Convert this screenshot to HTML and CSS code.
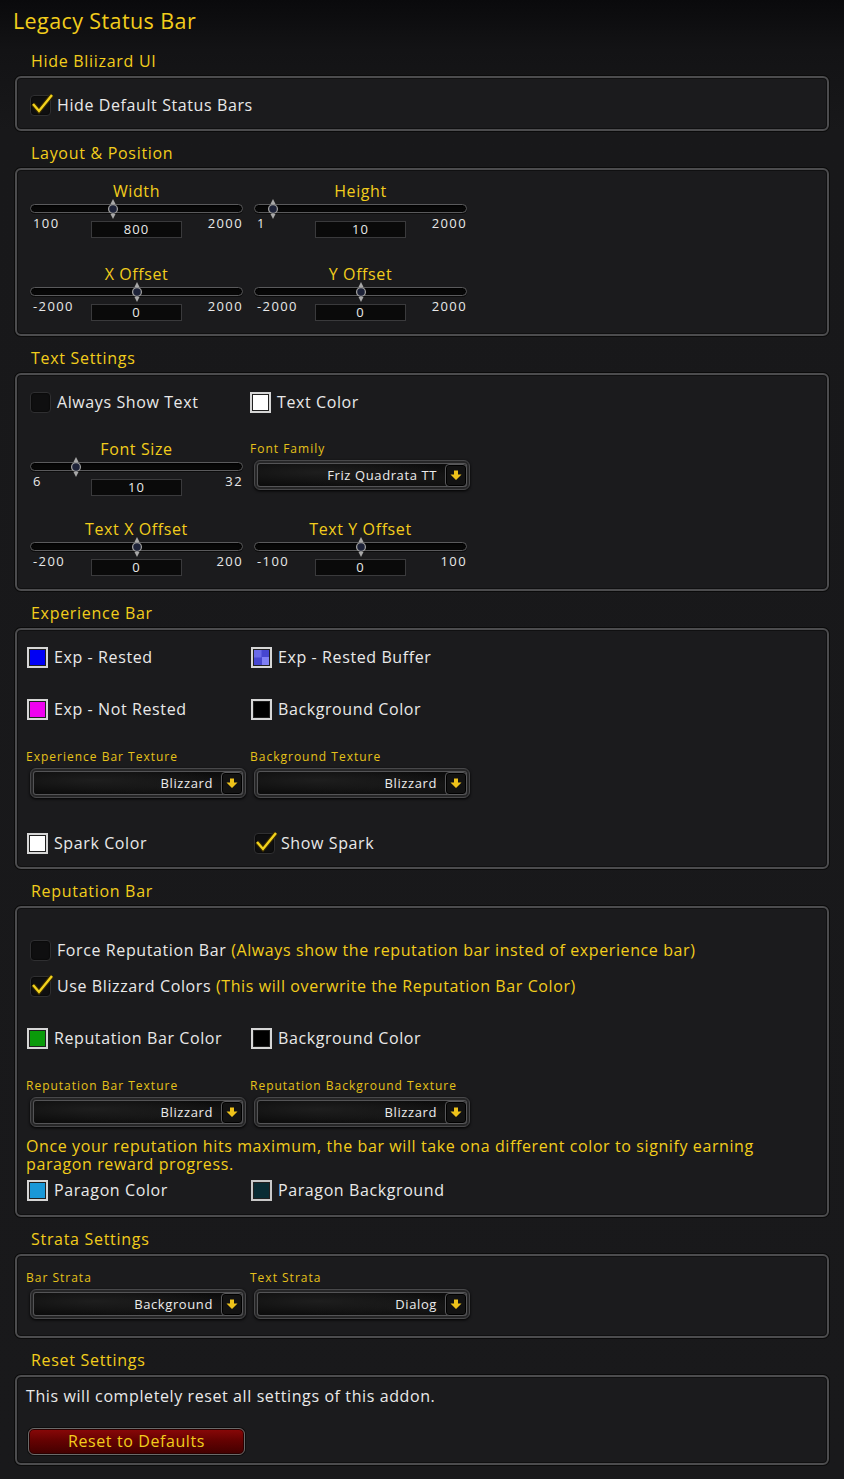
FILE: index.html
```html
<!DOCTYPE html>
<html lang="en">
<head>
<meta charset="utf-8">
<title>Legacy Status Bar</title>
<link rel="stylesheet" href="styles.css">
</head>
<body>
<div class="page">
  <h1 class="title">Legacy Status Bar</h1>

  <section>
    <h2 class="sec-head">Hide Bliizard UI</h2>
    <div class="panel p1">
      <div class="check-row"><span class="cb"><svg class="tick" viewBox="0 0 24 24" width="24" height="24"><path d="M2 12 L8 19 L21 3" fill="none" stroke="#3a2c00" stroke-width="4.5"/><path d="M2 12 L8 19 L21 3" fill="none" stroke="#f2d21c" stroke-width="2.4"/></svg></span><span>Hide Default Status Bars</span></div>
    </div>
  </section>

  <section>
    <h2 class="sec-head">Layout &amp; Position</h2>
    <div class="panel p2">
      <div class="cols sliders-grid">
        <div class="slider">
          <div class="slider-label">Width</div>
          <div class="track-wrap"><div class="track"></div><svg class="thumb" style="left:39%" viewBox="0 0 10 20" width="10" height="20"><path d="M5 0 L7.5 5 H2.5 Z" fill="#a8a8a8"/><path d="M2.5 15 H7.5 L5 20 Z" fill="#a8a8a8"/><circle cx="5" cy="10" r="4.4" fill="#1d2238" stroke="#9a9a9a" stroke-width="1.3"/></svg></div>
          <div class="slider-foot"><span class="min">100</span><span class="val">800</span><span class="max">2000</span></div>
        </div>
        <div class="slider">
          <div class="slider-label">Height</div>
          <div class="track-wrap"><div class="track"></div><svg class="thumb" style="left:9%" viewBox="0 0 10 20" width="10" height="20"><path d="M5 0 L7.5 5 H2.5 Z" fill="#a8a8a8"/><path d="M2.5 15 H7.5 L5 20 Z" fill="#a8a8a8"/><circle cx="5" cy="10" r="4.4" fill="#1d2238" stroke="#9a9a9a" stroke-width="1.3"/></svg></div>
          <div class="slider-foot"><span class="min">1</span><span class="val">10</span><span class="max">2000</span></div>
        </div>
        <div class="slider">
          <div class="slider-label">X Offset</div>
          <div class="track-wrap"><div class="track"></div><svg class="thumb" style="left:50%" viewBox="0 0 10 20" width="10" height="20"><path d="M5 0 L7.5 5 H2.5 Z" fill="#a8a8a8"/><path d="M2.5 15 H7.5 L5 20 Z" fill="#a8a8a8"/><circle cx="5" cy="10" r="4.4" fill="#1d2238" stroke="#9a9a9a" stroke-width="1.3"/></svg></div>
          <div class="slider-foot"><span class="min">-2000</span><span class="val">0</span><span class="max">2000</span></div>
        </div>
        <div class="slider">
          <div class="slider-label">Y Offset</div>
          <div class="track-wrap"><div class="track"></div><svg class="thumb" style="left:50%" viewBox="0 0 10 20" width="10" height="20"><path d="M5 0 L7.5 5 H2.5 Z" fill="#a8a8a8"/><path d="M2.5 15 H7.5 L5 20 Z" fill="#a8a8a8"/><circle cx="5" cy="10" r="4.4" fill="#1d2238" stroke="#9a9a9a" stroke-width="1.3"/></svg></div>
          <div class="slider-foot"><span class="min">-2000</span><span class="val">0</span><span class="max">2000</span></div>
        </div>
      </div>
    </div>
  </section>

  <section>
    <h2 class="sec-head">Text Settings</h2>
    <div class="panel p3">
      <div class="cols">
        <div class="check-row"><span class="cb"></span><span>Always Show Text</span></div>
        <div class="check-row"><span class="sw sw-white sw-first"></span><span>Text Color</span></div>
      </div>
      <div class="cols row-font">
        <div class="slider">
          <div class="slider-label">Font Size</div>
          <div class="track-wrap"><div class="track"></div><svg class="thumb" style="left:21.6%" viewBox="0 0 10 20" width="10" height="20"><path d="M5 0 L7.5 5 H2.5 Z" fill="#a8a8a8"/><path d="M2.5 15 H7.5 L5 20 Z" fill="#a8a8a8"/><circle cx="5" cy="10" r="4.4" fill="#1d2238" stroke="#9a9a9a" stroke-width="1.3"/></svg></div>
          <div class="slider-foot"><span class="min">6</span><span class="val">10</span><span class="max">32</span></div>
        </div>
        <div class="dd-field dd-offset">
          <div class="dd-label">Font Family</div>
          <div class="dropdown"><span class="dd-text">Friz Quadrata TT</span><span class="dd-btn"><svg viewBox="0 0 12 12" width="12" height="12"><path d="M4 1.5h4v4h3.5L6 11 0.5 5.5H4z" fill="#eec21a"/></svg></span></div>
        </div>
      </div>
      <div class="cols row-offset">
        <div class="slider">
          <div class="slider-label">Text X Offset</div>
          <div class="track-wrap"><div class="track"></div><svg class="thumb" style="left:50%" viewBox="0 0 10 20" width="10" height="20"><path d="M5 0 L7.5 5 H2.5 Z" fill="#a8a8a8"/><path d="M2.5 15 H7.5 L5 20 Z" fill="#a8a8a8"/><circle cx="5" cy="10" r="4.4" fill="#1d2238" stroke="#9a9a9a" stroke-width="1.3"/></svg></div>
          <div class="slider-foot"><span class="min">-200</span><span class="val">0</span><span class="max">200</span></div>
        </div>
        <div class="slider">
          <div class="slider-label">Text Y Offset</div>
          <div class="track-wrap"><div class="track"></div><svg class="thumb" style="left:50%" viewBox="0 0 10 20" width="10" height="20"><path d="M5 0 L7.5 5 H2.5 Z" fill="#a8a8a8"/><path d="M2.5 15 H7.5 L5 20 Z" fill="#a8a8a8"/><circle cx="5" cy="10" r="4.4" fill="#1d2238" stroke="#9a9a9a" stroke-width="1.3"/></svg></div>
          <div class="slider-foot"><span class="min">-100</span><span class="val">0</span><span class="max">100</span></div>
        </div>
      </div>
    </div>
  </section>

  <section>
    <h2 class="sec-head">Experience Bar</h2>
    <div class="panel p4">
      <div class="cols">
        <div class="check-row"><span class="sw sw-blue"></span><span>Exp - Rested</span></div>
        <div class="check-row"><span class="sw sw-buffer"></span><span>Exp - Rested Buffer</span></div>
      </div>
      <div class="cols gap30">
        <div class="check-row"><span class="sw sw-magenta"></span><span>Exp - Not Rested</span></div>
        <div class="check-row"><span class="sw sw-black"></span><span>Background Color</span></div>
      </div>
      <div class="cols gap30">
        <div class="dd-field">
          <div class="dd-label">Experience Bar Texture</div>
          <div class="dropdown"><span class="dd-text">Blizzard</span><span class="dd-btn"><svg viewBox="0 0 12 12" width="12" height="12"><path d="M4 1.5h4v4h3.5L6 11 0.5 5.5H4z" fill="#eec21a"/></svg></span></div>
        </div>
        <div class="dd-field">
          <div class="dd-label">Background Texture</div>
          <div class="dropdown"><span class="dd-text">Blizzard</span><span class="dd-btn"><svg viewBox="0 0 12 12" width="12" height="12"><path d="M4 1.5h4v4h3.5L6 11 0.5 5.5H4z" fill="#eec21a"/></svg></span></div>
        </div>
      </div>
      <div class="cols gap34">
        <div class="check-row"><span class="sw sw-white"></span><span>Spark Color</span></div>
        <div class="check-row"><span class="cb"><svg class="tick" viewBox="0 0 24 24" width="24" height="24"><path d="M2 12 L8 19 L21 3" fill="none" stroke="#3a2c00" stroke-width="4.5"/><path d="M2 12 L8 19 L21 3" fill="none" stroke="#f2d21c" stroke-width="2.4"/></svg></span><span>Show Spark</span></div>
      </div>
    </div>
  </section>

  <section>
    <h2 class="sec-head">Reputation Bar</h2>
    <div class="panel p5">
      <div class="check-row"><span class="cb"></span><span>Force Reputation Bar <span class="gold">(Always show the reputation bar insted of experience bar)</span></span></div>
      <div class="check-row gap14"><span class="cb"><svg class="tick" viewBox="0 0 24 24" width="24" height="24"><path d="M2 12 L8 19 L21 3" fill="none" stroke="#3a2c00" stroke-width="4.5"/><path d="M2 12 L8 19 L21 3" fill="none" stroke="#f2d21c" stroke-width="2.4"/></svg></span><span>Use Blizzard Colors <span class="gold">(This will overwrite the Reputation Bar Color)</span></span></div>
      <div class="cols gap30">
        <div class="check-row"><span class="sw sw-green"></span><span>Reputation Bar Color</span></div>
        <div class="check-row"><span class="sw sw-black"></span><span>Background Color</span></div>
      </div>
      <div class="cols gap30">
        <div class="dd-field">
          <div class="dd-label">Reputation Bar Texture</div>
          <div class="dropdown"><span class="dd-text">Blizzard</span><span class="dd-btn"><svg viewBox="0 0 12 12" width="12" height="12"><path d="M4 1.5h4v4h3.5L6 11 0.5 5.5H4z" fill="#eec21a"/></svg></span></div>
        </div>
        <div class="dd-field">
          <div class="dd-label">Reputation Background Texture</div>
          <div class="dropdown"><span class="dd-text">Blizzard</span><span class="dd-btn"><svg viewBox="0 0 12 12" width="12" height="12"><path d="M4 1.5h4v4h3.5L6 11 0.5 5.5H4z" fill="#eec21a"/></svg></span></div>
        </div>
      </div>
      <p class="note">Once your reputation hits maximum, the bar will take ona different color to signify earning<br>paragon reward progress.</p>
      <div class="cols gap6">
        <div class="check-row"><span class="sw sw-cyan"></span><span>Paragon Color</span></div>
        <div class="check-row"><span class="sw sw-teal"></span><span>Paragon Background</span></div>
      </div>
    </div>
  </section>

  <section>
    <h2 class="sec-head">Strata Settings</h2>
    <div class="panel p6">
      <div class="cols">
        <div class="dd-field">
          <div class="dd-label">Bar Strata</div>
          <div class="dropdown"><span class="dd-text">Background</span><span class="dd-btn"><svg viewBox="0 0 12 12" width="12" height="12"><path d="M4 1.5h4v4h3.5L6 11 0.5 5.5H4z" fill="#eec21a"/></svg></span></div>
        </div>
        <div class="dd-field">
          <div class="dd-label">Text Strata</div>
          <div class="dropdown"><span class="dd-text">Dialog</span><span class="dd-btn"><svg viewBox="0 0 12 12" width="12" height="12"><path d="M4 1.5h4v4h3.5L6 11 0.5 5.5H4z" fill="#eec21a"/></svg></span></div>
        </div>
      </div>
    </div>
  </section>

  <section>
    <h2 class="sec-head">Reset Settings</h2>
    <div class="panel p7">
      <p class="reset-text">This will completely reset all settings of this addon.</p>
      <button class="btn-reset" type="button">Reset to Defaults</button>
    </div>
  </section>
</div>
</body>
</html>
```

FILE: styles.css
```css
* { box-sizing: border-box; }

html, body {
  margin: 0;
  padding: 0;
}

body {
  background: linear-gradient(#0a0a0c 0px, #131315 50px, #18181a 130px, #19191b 100%);
  font-family: "Open Sans", "DejaVu Sans", sans-serif;
  color: #e9e9e9;
  letter-spacing: 0.6px;
  font-size: 16px;
}

.page {
  padding: 0 15px 14px 15px;
}

.title {
  margin: 0 0 0 -2px;
  padding: 7px 0 4px 0;
  font-size: 21.5px;
  line-height: 28px;
  font-weight: normal;
  color: #f2cd1c;
  letter-spacing: 0.4px;
}

.sec-head {
  margin: 12px 0 5px 16px;
  font-size: 16px;
  line-height: 20px;
  font-weight: normal;
  color: #f2cd1c;
  letter-spacing: 0.7px;
}

.panel {
  border: 2px solid #4c4c4e;
  border-radius: 6px;
  background: #1b1b1d;
  box-shadow: 0 0 0 1px #0b0b0b, inset 0 0 0 1px #101011;
  padding-left: 9px;
  padding-right: 9px;
}

.p1 { padding-top: 16px; padding-bottom: 13px; }
.p2 { padding-top: 12px; padding-bottom: 11px; }
.p3 { padding-top: 16px; padding-bottom: 11px; }
.p4 { padding-top: 16px; padding-bottom: 13px; }
.p5 { padding-top: 31px; padding-bottom: 14px; }
.p6 { padding-top: 15px; padding-bottom: 17px; }
.p7 { padding-top: 10px; padding-bottom: 8px; }

.cols {
  display: grid;
  grid-template-columns: 224px 224px;
}

.sliders-grid { row-gap: 25px; }
.row-font { margin-top: 27px; }
.row-offset { margin-top: 22px; }
.gap30 { margin-top: 30px; }
.gap34 { margin-top: 34px; }
.gap14 { margin-top: 14px; }
.gap6 { margin-top: 6px; }

/* check rows */
.check-row {
  display: flex;
  align-items: center;
  height: 22px;
  gap: 6px;
  white-space: nowrap;
  line-height: 21px;
}

.gold { color: #f2cd1c; }

.cb {
  position: relative;
  flex: none;
  width: 21px;
  height: 21px;
  margin-left: 4px;
  border-radius: 4px;
  background: #0f0f10;
  border: 1px solid #2f2f31;
  box-shadow: inset 0 0 2px #000;
}

.tick {
  position: absolute;
  left: 0;
  top: -4px;
}

.sw {
  flex: none;
  width: 21px;
  height: 21px;
  margin-left: 1px;
  border: 2px solid #d6d6d6;
  box-shadow: inset 0 0 0 1px #202020;
}

.sw-first { margin-left: 0; }
.sw-white { background: #ffffff; }
.sw-blue { background: #0000f4; }
.sw-magenta { background: #f000f0; }
.sw-black { background: #000000; }
.sw-green { background: #0a9a0a; }
.sw-cyan { background: #1a98d8; }
.sw-teal { background: #092c34; border-color: #c8c8c8; }
.sw-buffer {
  background:
    linear-gradient(#6a6ae8, #6a6ae8) 0 0 / 50% 50% no-repeat,
    linear-gradient(#7f7ff5, #7f7ff5) 100% 100% / 50% 50% no-repeat,
    #4646d0;
}

/* slider */
.slider {
  width: 213px;
  margin-left: 4px;
}

.slider-label {
  height: 18px;
  line-height: 18px;
  text-align: center;
  color: #f2cd1c;
  font-size: 16px;
}

.track-wrap {
  position: relative;
  height: 17px;
  display: flex;
  align-items: center;
}

.track {
  width: 100%;
  height: 9px;
  border-radius: 5px;
  background: #070707;
  border: 1px solid #5a5a5c;
  box-shadow: inset 0 1px 2px #000, 0 1px 0 #0c0c0c;
}

.thumb {
  position: absolute;
  top: -1px;
  transform: translateX(-50%);
}

.slider-foot {
  display: grid;
  grid-template-columns: 1fr 91px 1fr;
  height: 23px;
}

.min, .max {
  font-size: 13px;
  line-height: 12px;
  letter-spacing: 1.4px;
  color: #e9e9e9;
}

.min { padding-left: 3px; }
.max { text-align: right; padding-right: 0; }

.val {
  margin-top: 4px;
  height: 17px;
  background: #0a0a0a;
  border: 1px solid #3a3a3c;
  font-size: 13px;
  line-height: 15px;
  text-align: center;
  letter-spacing: 1px;
}

/* dropdowns */
.dd-offset { padding-top: 2px; }

.dd-label {
  height: 14px;
  line-height: 14px;
  font-size: 12px;
  color: #e6c21a;
  letter-spacing: 1px;
  white-space: nowrap;
}

.dropdown {
  margin-top: 4px;
  margin-left: 4px;
  width: 216px;
  height: 30px;
  display: flex;
  align-items: center;
  justify-content: flex-end;
  padding-right: 2px;
  border-radius: 6px;
  border: 1px solid #48484a;
  background:
    radial-gradient(ellipse at 30% 40%, #1e1e1e 0, transparent 60%),
    radial-gradient(ellipse at 75% 60%, #171717 0, transparent 55%),
    #0c0c0c;
  box-shadow: inset 0 0 0 2px #262627, inset 0 0 0 3px #545456, 0 1px 3px #000;
}

.dd-text {
  font-size: 13px;
  letter-spacing: 0.6px;
  color: #ececec;
  margin-right: 8px;
}

.dd-btn {
  width: 22px;
  height: 23px;
  display: flex;
  align-items: center;
  justify-content: center;
  background: #121212;
  border: 1px solid #58585a;
  border-radius: 4px;
  box-shadow: inset 0 0 0 1px #000;
}

/* note */
.note {
  margin: 10px 0 0 0;
  font-size: 16px;
  line-height: 18px;
  color: #f2cd1c;
}

/* reset */
.reset-text {
  margin: 0;
  line-height: 18px;
  font-size: 16px;
}

.btn-reset {
  display: block;
  margin: 23px 0 0 2px;
  width: 217px;
  height: 27px;
  border-radius: 6px;
  border: 1px solid #6a6a6a;
  background: linear-gradient(#8a0808, #650202 45%, #420000);
  box-shadow: inset 0 0 0 1px #2a0000, 0 0 0 1px #0e0e0e;
  color: #f2cd1c;
  font-family: "Open Sans", "DejaVu Sans", sans-serif;
  font-size: 16px;
  line-height: 22px;
  letter-spacing: 0.6px;
  padding: 0 0 2px 0;
}
```
